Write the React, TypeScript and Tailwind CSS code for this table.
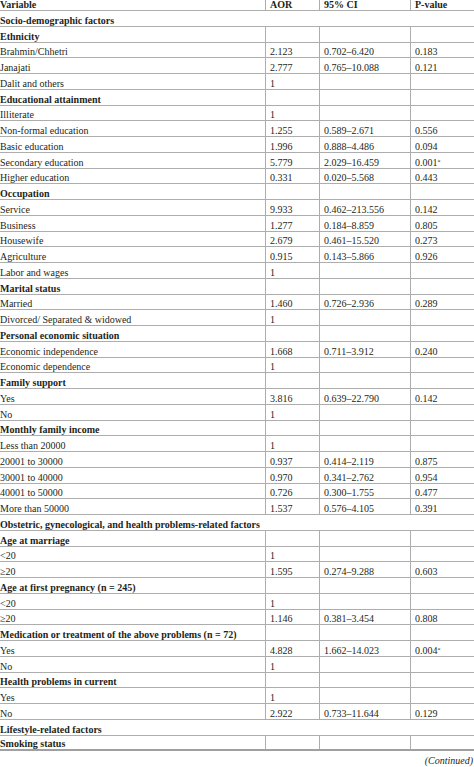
type Row =
  | { kind: "section"; label: string }
  | { kind: "group"; label: string }
  | { kind: "item"; label: string; aor?: string; ci?: string; p?: string; sig?: boolean };

const rows: Row[] = [
  { kind: "section", label: "Socio-demographic factors" },
  { kind: "group", label: "Ethnicity" },
  { kind: "item", label: "Brahmin/Chhetri", aor: "2.123", ci: "0.702–6.420", p: "0.183" },
  { kind: "item", label: "Janajati", aor: "2.777", ci: "0.765–10.088", p: "0.121" },
  { kind: "item", label: "Dalit and others", aor: "1" },
  { kind: "group", label: "Educational attainment" },
  { kind: "item", label: "Illiterate", aor: "1" },
  { kind: "item", label: "Non-formal education", aor: "1.255", ci: "0.589–2.671", p: "0.556" },
  { kind: "item", label: "Basic education", aor: "1.996", ci: "0.888–4.486", p: "0.094" },
  { kind: "item", label: "Secondary education", aor: "5.779", ci: "2.029–16.459", p: "0.001", sig: true },
  { kind: "item", label: "Higher education", aor: "0.331", ci: "0.020–5.568", p: "0.443" },
  { kind: "group", label: "Occupation" },
  { kind: "item", label: "Service", aor: "9.933", ci: "0.462–213.556", p: "0.142" },
  { kind: "item", label: "Business", aor: "1.277", ci: "0.184–8.859", p: "0.805" },
  { kind: "item", label: "Housewife", aor: "2.679", ci: "0.461–15.520", p: "0.273" },
  { kind: "item", label: "Agriculture", aor: "0.915", ci: "0.143–5.866", p: "0.926" },
  { kind: "item", label: "Labor and wages", aor: "1" },
  { kind: "group", label: "Marital status" },
  { kind: "item", label: "Married", aor: "1.460", ci: "0.726–2.936", p: "0.289" },
  { kind: "item", label: "Divorced/ Separated & widowed", aor: "1" },
  { kind: "group", label: "Personal economic situation" },
  { kind: "item", label: "Economic independence", aor: "1.668", ci: "0.711–3.912", p: "0.240" },
  { kind: "item", label: "Economic dependence", aor: "1" },
  { kind: "group", label: "Family support" },
  { kind: "item", label: "Yes", aor: "3.816", ci: "0.639–22.790", p: "0.142" },
  { kind: "item", label: "No", aor: "1" },
  { kind: "group", label: "Monthly family income" },
  { kind: "item", label: "Less than 20000", aor: "1" },
  { kind: "item", label: "20001 to 30000", aor: "0.937", ci: "0.414–2.119", p: "0.875" },
  { kind: "item", label: "30001 to 40000", aor: "0.970", ci: "0.341–2.762", p: "0.954" },
  { kind: "item", label: "40001 to 50000", aor: "0.726", ci: "0.300–1.755", p: "0.477" },
  { kind: "item", label: "More than 50000", aor: "1.537", ci: "0.576–4.105", p: "0.391" },
  { kind: "section", label: "Obstetric, gynecological, and health problems-related factors" },
  { kind: "group", label: "Age at marriage" },
  { kind: "item", label: "<20", aor: "1" },
  { kind: "item", label: "≥20", aor: "1.595", ci: "0.274–9.288", p: "0.603" },
  { kind: "group", label: "Age at first pregnancy (n = 245)" },
  { kind: "item", label: "<20", aor: "1" },
  { kind: "item", label: "≥20", aor: "1.146", ci: "0.381–3.454", p: "0.808" },
  { kind: "group", label: "Medication or treatment of the above problems (n = 72)" },
  { kind: "item", label: "Yes", aor: "4.828", ci: "1.662–14.023", p: "0.004", sig: true },
  { kind: "item", label: "No", aor: "1" },
  { kind: "group", label: "Health problems in current" },
  { kind: "item", label: "Yes", aor: "1" },
  { kind: "item", label: "No", aor: "2.922", ci: "0.733–11.644", p: "0.129" },
  { kind: "section", label: "Lifestyle-related factors" },
  { kind: "group", label: "Smoking status" },
];

const cell = "flex items-end pl-[4px] border-l border-[#adadad] h-full";

export default function App() {
  return (
    <div
      className="w-[474px] h-[767px] overflow-hidden bg-white text-[#231f20] text-[10px] leading-none"
      style={{ fontFamily: '"Liberation Serif", "Times New Roman", serif' }}
    >
      {/* Header (top clipped in the source) */}
      <div className="flex h-[11px] border-b border-[#adadad] font-bold">
        <div className="w-[265px] flex items-end">Variable</div>
        <div className={`w-[54px] ${cell}`}>AOR</div>
        <div className={`w-[91px] ${cell}`}>95% CI</div>
        <div className={`flex-1 ${cell}`}>P-value</div>
      </div>

      {rows.map((r, i) => {
        const last = i === rows.length - 1;
        const line = last ? "border-b-2 border-[#a0a0a0]" : "border-b border-[#adadad]";
        if (r.kind === "section") {
          return (
            <div key={i} className={`flex items-end h-[15.75px] font-bold whitespace-nowrap ${line}`}>
              {r.label}
            </div>
          );
        }
        return (
          <div key={i} className={`flex h-[15.75px] ${line}`}>
            <div
              className={`w-[265px] flex items-end whitespace-nowrap ${r.kind === "group" ? "font-bold" : ""}`}
            >
              {r.label}
            </div>
            <div className={`w-[54px] ${cell}`}>{r.kind === "item" ? r.aor : null}</div>
            <div className={`w-[91px] ${cell}`}>{r.kind === "item" ? r.ci : null}</div>
            <div className={`flex-1 ${cell}`}>
              {r.kind === "item" && r.p}
              {r.kind === "item" && r.sig && <sup className="text-[6px] leading-none">*</sup>}
            </div>
          </div>
        );
      })}

      <div className="flex justify-end pt-[5px] pr-[1px] italic">(Continued)</div>
    </div>
  );
}
